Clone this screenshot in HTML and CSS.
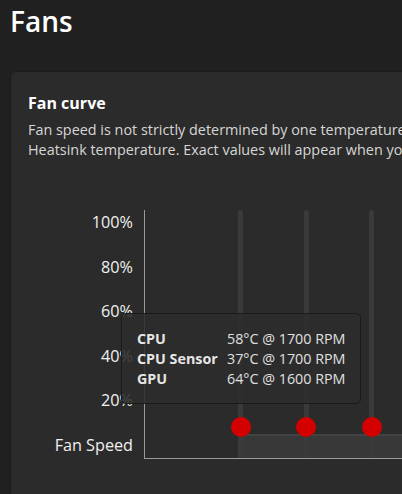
FILE: index.html
```html
<!DOCTYPE html>
<html lang="en">
<head>
<meta charset="utf-8">
<title>Fans</title>
<link rel="stylesheet" href="styles.css">
</head>
<body>
  <h1 class="page-title">Fans</h1>
  <section class="card">
    <h2 class="card-title">Fan curve</h2>
    <p class="card-desc">
      <span class="line">Fan speed is not strictly determined by one temperature sensor, but by CPU, GPU and</span>
      <span class="line">Heatsink temperature. Exact values will appear when you hover over the chart.</span>
    </p>
    <div class="chart">
      <div class="axis-labels">
        <div class="axis-label">100%</div>
        <div class="axis-label">80%</div>
        <div class="axis-label">60%</div>
        <div class="axis-label">40%</div>
        <div class="axis-label">20%</div>
        <div class="axis-label">Fan Speed</div>
      </div>
      <div class="plot">
        <div class="bar"></div>
        <div class="track" style="left:93px"></div>
        <div class="track" style="left:159px"></div>
        <div class="track" style="left:224px"></div>
        <div class="dot" style="left:86px"></div>
        <div class="dot" style="left:151px"></div>
        <div class="dot" style="left:217px"></div>
      </div>
      <div class="tooltip">
        <span class="tt-name">CPU</span><span class="tt-val">58°C @ 1700 RPM</span>
        <span class="tt-name">CPU Sensor</span><span class="tt-val">37°C @ 1700 RPM</span>
        <span class="tt-name">GPU</span><span class="tt-val">64°C @ 1600 RPM</span>
      </div>
    </div>
  </section>
</body>
</html>
```
FILE: styles.css
```css
html, body {
  margin: 0;
  padding: 0;
}
body {
  background: #202020;
  color: #ffffff;
  font-family: "Open Sans", "Noto Sans", sans-serif;
  overflow: hidden;
  width: 402px;
  height: 494px;
}
.page-title {
  margin: 0;
  padding: 3px 0 0 10px;
  font-size: 28px;
  line-height: 36px;
  font-weight: 600;
  color: #ffffff;
}
.card {
  margin: 32px 0 0 10px;
  width: 620px;
  height: 440px;
  box-sizing: border-box;
  background: #2b2b2b;
  border: 1px solid #1c1c1c;
  border-radius: 6px;
  padding: 20px 17px;
}
.card-title {
  margin: 0;
  font-size: 16px;
  line-height: 22px;
  font-weight: 700;
  color: #ffffff;
}
.card-desc {
  margin: 6px 0 0 0;
  font-size: 14.4px;
  line-height: 20px;
  color: #d6d6d6;
}
.line {
  display: block;
  white-space: nowrap;
}
.chart {
  position: relative;
  margin-top: 50px;
  display: flex;
  gap: 11px;
}
.axis-labels {
  width: 105px;
  margin-top: -10px;
  display: flex;
  flex-direction: column;
  align-items: flex-end;
}
.axis-label {
  height: 44.5px;
  line-height: 44.5px;
  font-size: 16.2px;
  color: #f0f0f0;
  white-space: nowrap;
}
.plot {
  position: relative;
  flex: 1;
  height: 249px;
  box-sizing: border-box;
  border-left: 1px solid #999999;
  border-bottom: 1px solid #999999;
}
.track {
  position: absolute;
  top: 0;
  bottom: 0;
  width: 5px;
  background: #3a3a3a;
  border-radius: 3px 3px 0 0;
}
.bar {
  position: absolute;
  left: 97px;
  right: 0;
  top: 224px;
  bottom: 0;
  background: #383838;
  border-top: 2px solid #424242;
}
.dot {
  position: absolute;
  top: 207px;
  width: 20px;
  height: 20px;
  border-radius: 50%;
  background: #d40000;
}
.tooltip {
  position: absolute;
  left: 93px;
  top: 103px;
  width: 240px;
  height: 91px;
  box-sizing: border-box;
  padding: 15px 0 0 15px;
  background: rgba(44, 44, 44, 0.88);
  border: 1px solid #1a1a1a;
  border-radius: 5px;
  display: grid;
  grid-template-columns: 90px auto;
  grid-auto-rows: 20px;
  align-content: start;
  font-size: 14.3px;
  line-height: 20px;
}
.tt-name {
  font-weight: 700;
  color: #e6e6e6;
  white-space: nowrap;
}
.tt-val {
  color: #e0e0e0;
  white-space: nowrap;
}
```
